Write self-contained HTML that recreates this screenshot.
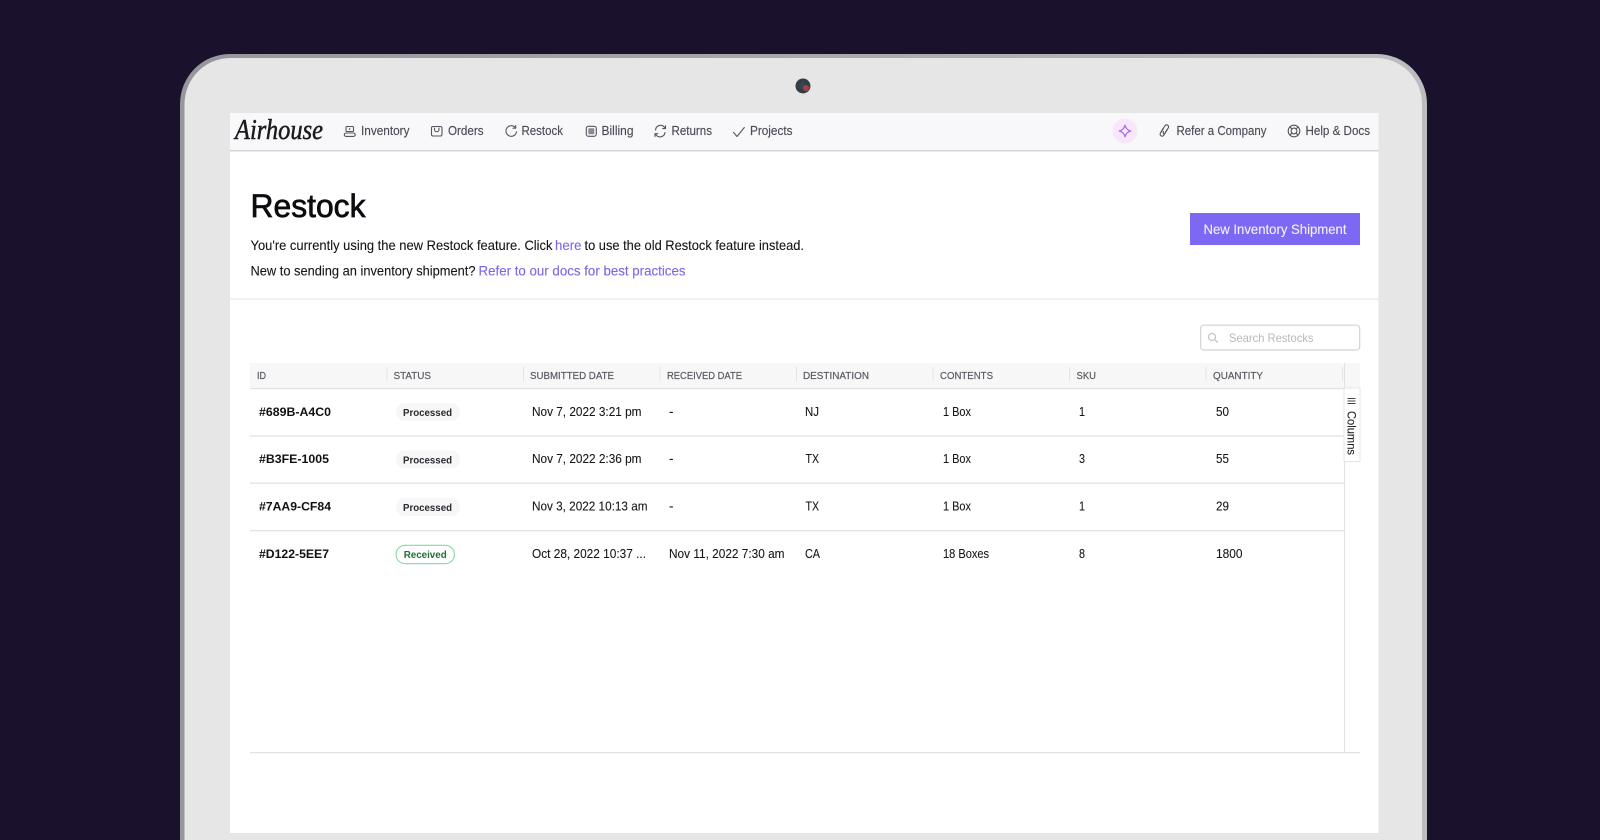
<!DOCTYPE html>
<html lang="en"><head><meta charset="utf-8"><title>Restock</title>
<style>
html,body{margin:0;padding:0;background:#1a112d;width:1600px;height:840px;overflow:hidden}
svg{display:block;filter:blur(.25px)}
text{font-family:"Liberation Sans",Arial,sans-serif;white-space:pre}
.nav{font-size:13px;fill:#4c4c56;stroke:#4c4c56;stroke-width:.15}
.b{font-size:14px;fill:#141418;stroke:#141418;stroke-width:.1}
.h{font-size:10.3px;fill:#5a5a62;stroke:#5a5a62;stroke-width:.2}
.c{font-size:13px;fill:#17171b;stroke:#17171b;stroke-width:.1}
.id{font-size:12.3px;fill:#111;font-weight:700}
.p{font-size:10.5px;fill:#2a2a30;font-weight:700}
.i{fill:none;stroke:#55555f;stroke-width:1.1;stroke-linecap:round;stroke-linejoin:round}
</style></head><body>
<svg width="1600" height="840" viewBox="0 0 1600 840" xmlns="http://www.w3.org/2000/svg">
<defs>
<linearGradient id="edge" x1="0" x2="1" y1="0" y2="0"><stop offset="0" stop-color="#96969b"/><stop offset=".5" stop-color="#a8a8ac"/><stop offset="1" stop-color="#bdbdc0"/></linearGradient>
<radialGradient id="cam" cx=".45" cy=".45" r=".6"><stop offset="0" stop-color="#3d4a52"/><stop offset=".7" stop-color="#2e3a44"/><stop offset="1" stop-color="#4a4f55"/></radialGradient>
</defs>
<rect width="1600" height="840" fill="#1a112d"/>
<path d="M180 840V104a50 50 0 0 1 50-50H1377a50 50 0 0 1 50 50V840Z" fill="url(#edge)"/>
<path d="M184.500 840V104a46 46 0 0 1 46-46H1376a46 46 0 0 1 46 46V840Z" fill="#e6e6e6"/>
<circle cx="803" cy="86" r="7.500" fill="url(#cam)"/>
<circle cx="806" cy="88" r="3" fill="#b8403f" opacity=".9"/>
<rect x="230" y="113" width="1148.500" height="720" fill="#fff"/>
<rect x="230" y="113" width="1148.500" height="37" fill="#f8f8fa"/>
<rect x="230" y="150" width="1148.500" height="1.500" fill="#d4d4d8"/>

<text x="235" y="139" font-size="28" style="font-family:'Liberation Serif',serif;font-style:italic" fill="#1b1b1f" stroke="#1b1b1f" stroke-width=".5" textLength="88" lengthAdjust="spacingAndGlyphs">Airhouse</text>

<path class="i" d="M347 126.500h5.500a1 1 0 0 1 1 1v3a1 1 0 0 1-1 1H347a1 1 0 0 1-1-1v-3a1 1 0 0 1 1-1zM349.700 128.500v1M346 133h7.500a1.700 1.700 0 0 1 0 3.400H346a1.700 1.700 0 0 1 0-3.400z"/>
<text class="nav" x="361" y="135.200" textLength="48.500" lengthAdjust="spacingAndGlyphs">Inventory</text>
<path class="i" d="M433 126.500h7.500a1.500 1.500 0 0 1 1.500 1.500v6.500a1.500 1.500 0 0 1-1.500 1.500H433a1.500 1.500 0 0 1-1.500-1.500V128a1.500 1.500 0 0 1 1.500-1.500zM434.500 128v1.500a2.200 2.200 0 0 0 4.500 0V128"/>
<text class="nav" x="448" y="135.200" textLength="35.500" lengthAdjust="spacingAndGlyphs">Orders</text>
<path class="i" d="M515.500 127.800a5.300 5.300 0 1 0 1 4M515.700 125.500v2.700H513"/>
<text class="nav" x="521.500" y="135.200" textLength="41.500" lengthAdjust="spacingAndGlyphs">Restock</text>
<rect class="i" x="586.300" y="126.300" width="10" height="10" rx="2.200"/>
<rect x="588.300" y="128.300" width="6" height="6" rx=".8" fill="#8a8a92"/>
<text class="nav" x="601.500" y="135.200" textLength="32" lengthAdjust="spacingAndGlyphs">Billing</text>
<path class="i" d="M655.500 130a5 5 0 0 1 9-2.600l1 1.100M665.500 125.800v2.800h-2.800M665 132.500a5 5 0 0 1-9 2.300l-1-1.100M655 136.500v-2.800h2.800"/>
<text class="nav" x="671.500" y="135.200" textLength="40.500" lengthAdjust="spacingAndGlyphs">Returns</text>
<path class="i" d="M733.500 132.300l3.500 4.200 7.300-9"/>
<text class="nav" x="750" y="135.200" textLength="42.500" lengthAdjust="spacingAndGlyphs">Projects</text>

<circle cx="1125" cy="131" r="12.500" fill="#f7e7fb"/>
<path d="M1125 125.200c.8 3.400 2.400 5 5.800 5.800-3.400.8-5 2.400-5.800 5.800-.8-3.400-2.400-5-5.800-5.800 3.400-.8 5-2.400 5.800-5.800z" fill="none" stroke="#b16fe6" stroke-width="1.300" stroke-linejoin="round"/>
<path class="i" d="M1165 133.500l3.300-5.700a2 2 0 0 0-.7-2.700 2 2 0 0 0-2.700.7l-3.700 6.400M1163 128.500l-2.600 4.700a2 2 0 0 0 .7 2.700 2 2 0 0 0 2.700-.7l3.500-6M1163.500 131.500a2 2 0 0 0 .4 2.500"/>
<text class="nav" x="1176.500" y="135.200" textLength="90" lengthAdjust="spacingAndGlyphs">Refer a Company</text>
<circle class="i" cx="1294" cy="131" r="5.800"/><circle class="i" cx="1294" cy="131" r="2.900"/>
<path class="i" d="M1290 127l2 2M1298 127l-2 2M1290 135l2-2M1298 135l-2-2"/>
<text class="nav" x="1305.500" y="135.200" textLength="64.500" lengthAdjust="spacingAndGlyphs">Help &amp; Docs</text>

<text x="250.500" y="217" font-size="32.500" fill="#0c0c10" stroke="#0c0c10" stroke-width=".7" textLength="115" lengthAdjust="spacingAndGlyphs">Restock</text>
<text class="b" x="250.500" y="250" textLength="302" lengthAdjust="spacingAndGlyphs">You're currently using the new Restock feature. Click</text>
<text class="b" x="555" y="250" textLength="26.500" lengthAdjust="spacingAndGlyphs" style="fill:#7a66e8;stroke:#7a66e8">here</text>
<text class="b" x="584.500" y="250" textLength="219.500" lengthAdjust="spacingAndGlyphs">to use the old Restock feature instead.</text>
<text class="b" x="250.500" y="275.300" textLength="225" lengthAdjust="spacingAndGlyphs">New to sending an inventory shipment?</text>
<text class="b" x="478.500" y="275.300" textLength="207" lengthAdjust="spacingAndGlyphs" style="fill:#7a66e8;stroke:#7a66e8">Refer to our docs for best practices</text>

<rect x="1190" y="213" width="170" height="32" fill="#7d68f4"/>
<text x="1203.500" y="234" font-size="14" fill="#f4f2ff" stroke="#f4f2ff" stroke-width=".1" textLength="143" lengthAdjust="spacingAndGlyphs">New Inventory Shipment</text>
<rect x="230" y="298.500" width="1148.500" height="1.200" fill="#e6e6e8"/>

<rect x="1200.700" y="325.200" width="159" height="24.800" rx="3" fill="#fff" stroke="#d2d2d6" stroke-width="1.200"/>
<circle cx="1212" cy="337" r="3.500" fill="none" stroke="#c4c4c8" stroke-width="1.200"/>
<path d="M1214.700 339.700l3 3" stroke="#c4c4c8" stroke-width="1.300"/>
<text x="1229" y="342" font-size="12" fill="#b9b9bd" textLength="84.500" lengthAdjust="spacingAndGlyphs">Search Restocks</text>

<rect x="250" y="363" width="1110" height="25" fill="#f7f7f8"/>
<rect x="250" y="388" width="1094" height="1.200" fill="#e2e2e5"/>
<g fill="#e4e4e7">
<rect x="386.500" y="367" width="1" height="14"/><rect x="523" y="367" width="1" height="14"/><rect x="659.500" y="367" width="1" height="14"/><rect x="796" y="367" width="1" height="14"/><rect x="932.500" y="367" width="1" height="14"/><rect x="1069" y="367" width="1" height="14"/><rect x="1205.500" y="367" width="1" height="14"/><rect x="1342" y="367" width="1" height="14"/>
</g>
<text class="h" x="257" y="379" textLength="9" lengthAdjust="spacingAndGlyphs">ID</text>
<text class="h" x="393.500" y="379" textLength="37.500" lengthAdjust="spacingAndGlyphs">STATUS</text>
<text class="h" x="530" y="379" textLength="84" lengthAdjust="spacingAndGlyphs">SUBMITTED DATE</text>
<text class="h" x="667" y="379" textLength="75" lengthAdjust="spacingAndGlyphs">RECEIVED DATE</text>
<text class="h" x="803" y="379" textLength="66" lengthAdjust="spacingAndGlyphs">DESTINATION</text>
<text class="h" x="940" y="379" textLength="53" lengthAdjust="spacingAndGlyphs">CONTENTS</text>
<text class="h" x="1076.500" y="379" textLength="19.500" lengthAdjust="spacingAndGlyphs">SKU</text>
<text class="h" x="1213" y="379" textLength="50" lengthAdjust="spacingAndGlyphs">QUANTITY</text>

<g fill="#e2e2e5">
<rect x="250" y="435.300" width="1094" height="1.300"/><rect x="250" y="482.500" width="1094" height="1.300"/><rect x="250" y="530" width="1094" height="1.300"/>
<rect x="250" y="752" width="1110" height="1.200"/>
<rect x="1344" y="363" width="1" height="390"/>
</g>
<rect x="1344" y="388" width="16" height="73.500" fill="#fff" stroke="#e4e4e7" stroke-width="1"/>
<path d="M1347.500 398.500h8M1347.500 401h8M1347.500 403.500h8" stroke="#444" stroke-width=".9" fill="none"/>
<text transform="translate(1347.500 411) rotate(90)" x="0" y="0" font-size="12" fill="#222" stroke="#222" stroke-width=".1" textLength="44" lengthAdjust="spacingAndGlyphs">Columns</text>

<text class="id" x="259" y="416" textLength="72" lengthAdjust="spacingAndGlyphs">#689B-A4C0</text>
<text class="id" x="259" y="463.200" textLength="70" lengthAdjust="spacingAndGlyphs">#B3FE-1005</text>
<text class="id" x="259" y="510.500" textLength="72" lengthAdjust="spacingAndGlyphs">#7AA9-CF84</text>
<text class="id" x="259" y="558" textLength="70" lengthAdjust="spacingAndGlyphs">#D122-5EE7</text>

<rect x="396" y="403" width="64" height="18" rx="9" fill="#f7f7f8"/>
<text class="p" x="403" y="416" textLength="49" lengthAdjust="spacingAndGlyphs">Processed</text>
<rect x="396" y="450.500" width="64" height="18" rx="9" fill="#f7f7f8"/>
<text class="p" x="403" y="463.300" textLength="49" lengthAdjust="spacingAndGlyphs">Processed</text>
<rect x="396" y="498" width="64" height="18" rx="9" fill="#f7f7f8"/>
<text class="p" x="403" y="510.800" textLength="49" lengthAdjust="spacingAndGlyphs">Processed</text>
<rect x="396" y="545.300" width="58.500" height="18.400" rx="9.200" fill="#fff" stroke="#86d8a4" stroke-width="1.100"/>
<text class="p" x="403.700" y="558.200" textLength="43" lengthAdjust="spacingAndGlyphs" style="fill:#1f6f3a">Received</text>

<text class="c" x="532" y="416" textLength="109.500" lengthAdjust="spacingAndGlyphs">Nov 7, 2022 3:21 pm</text>
<text class="c" x="532" y="463.200" textLength="109.500" lengthAdjust="spacingAndGlyphs">Nov 7, 2022 2:36 pm</text>
<text class="c" x="532" y="510.500" textLength="115.500" lengthAdjust="spacingAndGlyphs">Nov 3, 2022 10:13 am</text>
<text class="c" x="532" y="558" textLength="114" lengthAdjust="spacingAndGlyphs">Oct 28, 2022 10:37 ...</text>

<text class="c" x="669" y="416" textLength="4.500" lengthAdjust="spacingAndGlyphs">-</text>
<text class="c" x="669" y="463.200" textLength="4.500" lengthAdjust="spacingAndGlyphs">-</text>
<text class="c" x="669" y="510.500" textLength="4.500" lengthAdjust="spacingAndGlyphs">-</text>
<text class="c" x="669" y="558" textLength="115.500" lengthAdjust="spacingAndGlyphs">Nov 11, 2022 7:30 am</text>

<text class="c" x="805" y="416" textLength="14" lengthAdjust="spacingAndGlyphs">NJ</text>
<text class="c" x="805.500" y="463.200" textLength="13.500" lengthAdjust="spacingAndGlyphs">TX</text>
<text class="c" x="805.500" y="510.500" textLength="13.500" lengthAdjust="spacingAndGlyphs">TX</text>
<text class="c" x="805" y="558" textLength="15" lengthAdjust="spacingAndGlyphs">CA</text>

<text class="c" x="943" y="416" textLength="28" lengthAdjust="spacingAndGlyphs">1 Box</text>
<text class="c" x="943" y="463.200" textLength="28" lengthAdjust="spacingAndGlyphs">1 Box</text>
<text class="c" x="943" y="510.500" textLength="28" lengthAdjust="spacingAndGlyphs">1 Box</text>
<text class="c" x="943" y="558" textLength="46" lengthAdjust="spacingAndGlyphs">18 Boxes</text>

<text class="c" x="1079" y="416" textLength="6" lengthAdjust="spacingAndGlyphs">1</text>
<text class="c" x="1079" y="463.200" textLength="6" lengthAdjust="spacingAndGlyphs">3</text>
<text class="c" x="1079" y="510.500" textLength="6" lengthAdjust="spacingAndGlyphs">1</text>
<text class="c" x="1079" y="558" textLength="6" lengthAdjust="spacingAndGlyphs">8</text>

<text class="c" x="1216" y="416" textLength="13" lengthAdjust="spacingAndGlyphs">50</text>
<text class="c" x="1216" y="463.200" textLength="13" lengthAdjust="spacingAndGlyphs">55</text>
<text class="c" x="1216" y="510.500" textLength="13" lengthAdjust="spacingAndGlyphs">29</text>
<text class="c" x="1216" y="558" textLength="26.500" lengthAdjust="spacingAndGlyphs">1800</text>
</svg>
</body></html>
